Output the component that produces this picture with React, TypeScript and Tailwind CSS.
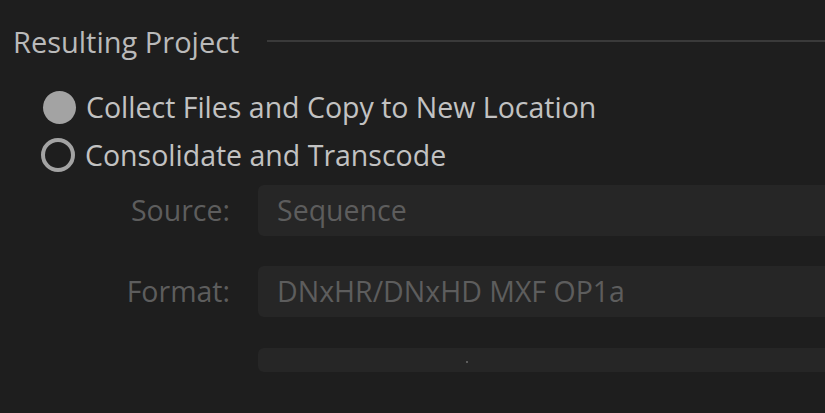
const Radio = ({ checked }: { checked: boolean }) =>
  checked ? (
    <span className="block w-[33px] h-[33px] rounded-full bg-[#a3a3a3] shrink-0" />
  ) : (
    <span className="block w-[34px] h-[34px] rounded-full border-[4px] border-[#a3a3a3] shrink-0" />
  );

const Field = ({ label, value, className }: { label: string; value: string; className: string }) => (
  <div className={`flex items-center ${className}`}>
    <div className="w-[230px] shrink-0 text-right text-[28.5px] leading-none text-[#5d5d5d]">{label}</div>
    <div className="ml-[28px] flex-1 h-[51px] rounded-l-[6px] bg-[#262626] flex items-center pl-[19px] text-[28.5px] leading-none text-[#5d5d5d] whitespace-nowrap">
      {value}
    </div>
  </div>
);

export default function App() {
  return (
    <div
      className="w-[825px] h-[413px] overflow-hidden bg-[#1e1e1e] flex flex-col"
      style={{ fontFamily: '"Open Sans", "Noto Sans", sans-serif' }}
    >
      {/* Section header */}
      <div className="flex items-center mt-[21px] pl-[13px] h-[40px]">
        <span className="text-[29px] text-[#bababa] leading-none whitespace-nowrap">Resulting Project</span>
        <div className="ml-[28px] flex-1 h-[2px] bg-[#3a3a3a]" />
      </div>

      {/* Radio options */}
      <div className="flex items-center gap-[10px] mt-[26px] pl-[43px] h-[40px]">
        <Radio checked />
        <span className="text-[28.5px] leading-none text-[#c2c2c2] whitespace-nowrap">Collect Files and Copy to New Location</span>
      </div>
      <div className="flex items-center gap-[10px] mt-[8px] pl-[41px] h-[40px]">
        <Radio checked={false} />
        <span className="text-[28.5px] leading-none text-[#c2c2c2] whitespace-nowrap">Consolidate and Transcode</span>
      </div>

      <Field label="Source:" value="Sequence" className="mt-[10px]" />
      <Field label="Format:" value="DNxHR/DNxHD MXF OP1a" className="mt-[30px]" />

      {/* Preset field, cut off */}
      <div className="flex mt-[31px]">
        <div className="ml-[258px] flex-1 h-[24px] rounded-l-[6px] bg-[#262626] relative">
          <span className="absolute left-[208px] top-[13px] w-[2px] h-[2px] bg-[#5d5d5d]" />
        </div>
      </div>
    </div>
  );
}
